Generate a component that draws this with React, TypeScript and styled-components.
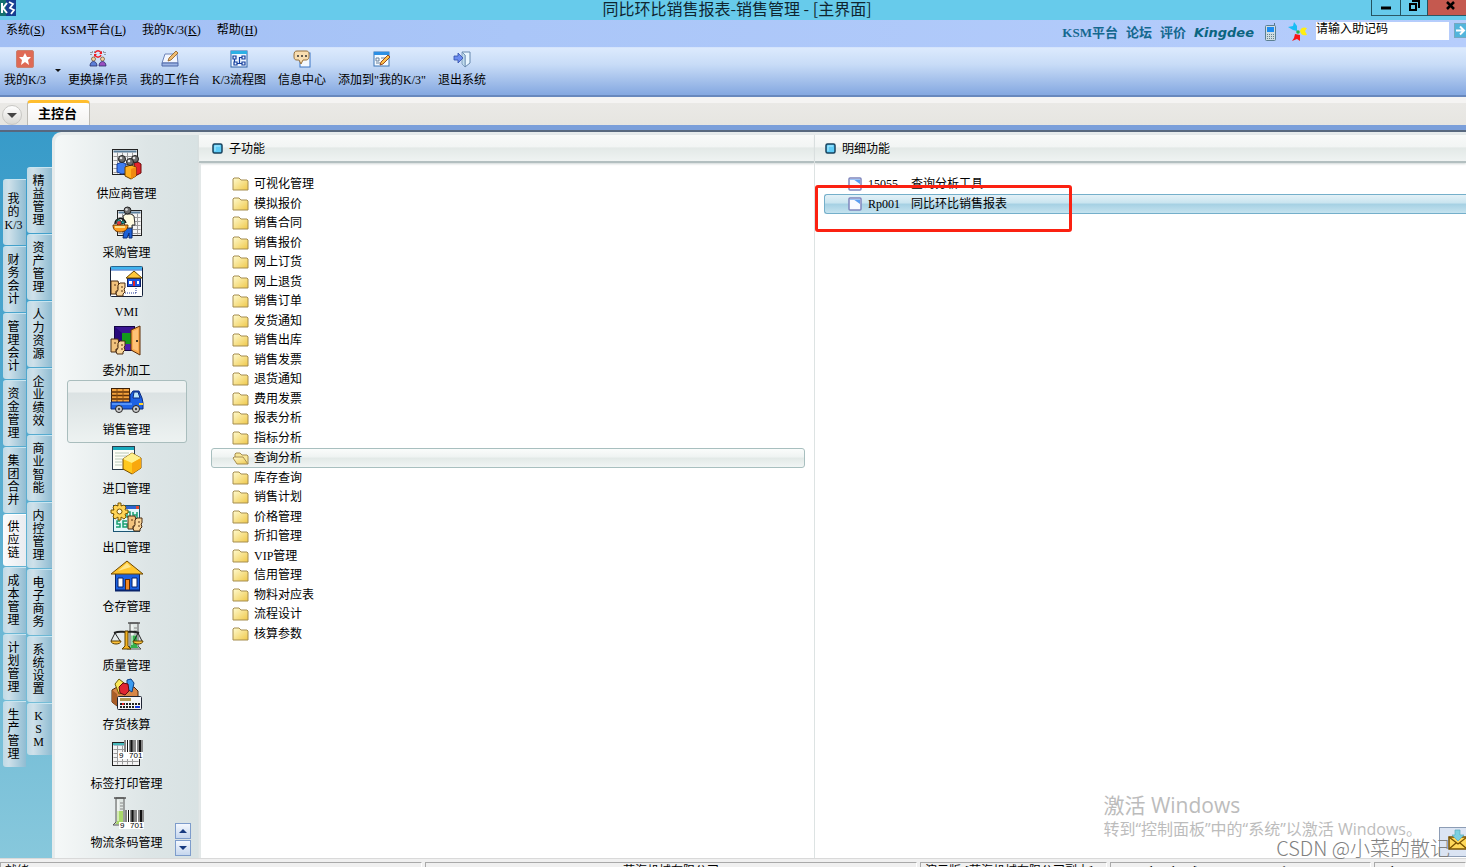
import React from "react";
import styled, { createGlobalStyle } from "styled-components";

const GlobalStyle = createGlobalStyle`
  * { box-sizing: border-box; }
  html, body { margin: 0; height: 100%; overflow: hidden; }
  body, button, input { font-family: "Liberation Serif", "Noto Sans CJK SC", serif; font-size: 12px; color: #000; }
  button { border: 0; background: none; padding: 0; margin: 0; cursor: pointer; white-space: nowrap; }
  svg { display: block; flex: none; }
  ul { list-style: none; margin: 0; padding: 0; }
`;

const Shell = styled.div`
  position: relative;
  display: flex;
  flex-direction: column;
  height: 100vh;
  overflow: hidden;
  background: #fff;
`;

const TitleBar = styled.header`
  display: flex;
  align-items: flex-start;
  height: 20px;
  background: #67cbeb;
`;
const TitleText = styled.h1`
  flex: 1;
  margin: 0;
  padding-left: 87px;
  text-align: center;
  font: 16px/16px "Noto Sans CJK SC", sans-serif;
  color: #102530;
`;
const WindowButtons = styled.div`
  display: flex;
  border-left: 1px solid #22525f;
`;
const WindowButton = styled.button<{ $width: number; $danger?: boolean }>`
  display: flex;
  justify-content: center;
  width: ${(p) => p.$width}px;
  height: 16px;
  border-bottom: 1px solid #2b5965;
  border-right: ${(p) => (p.$danger ? "0" : "1px solid #22525f")};
  padding-left: ${(p) => (p.$danger ? 8 : 0)}px;
  background: ${(p) => (p.$danger ? "#c5594f" : "transparent")};
`;

const MenuBar = styled.div`
  display: flex;
  justify-content: space-between;
  height: 27px;
  background: linear-gradient(90deg, #a2bff4, #aac6f8 35%, #b6cdfc);
`;
const Menus = styled.nav`
  display: flex;
  gap: 16px;
  padding-left: 6px;
`;
const MenuButton = styled.button`
  height: 20px;
  line-height: 20px;
`;
const QuickLinks = styled.div`
  display: flex;
  align-items: flex-start;
  height: 27px;
`;
const QuickLink = styled.a`
  margin-right: 8px;
  font-size: 13px;
  font-weight: bold;
  line-height: 26px;
  color: #14688f;
  text-decoration: none;
`;
const Brand = styled.a`
  font: italic bold 13px/25px "DejaVu Sans", sans-serif;
  color: #0b6580;
  text-decoration: none;
`;
const IconSlot = styled.span<{ $left: number; $top: number }>`
  padding: ${(p) => p.$top}px 0 0 ${(p) => p.$left}px;
`;
const SearchInput = styled.input`
  width: 133px;
  height: 18px;
  margin: 2px 5px 0 8px;
  padding: 0 0 3px;
  border: 0;
  outline: 0;
  background: #fff;
  &::placeholder { color: #000; opacity: 1; }
`;
const GoButton = styled.button`
  width: 12px;
  margin-top: 3px;
  overflow: hidden;
`;

const ToolBar = styled.div`
  display: flex;
  gap: 12px;
  height: 50px;
  padding-left: 4px;
  background: linear-gradient(#dceafd 0, #c8dcf7 35%, #86a9e1 46px);
  border-top: 1px solid #d4e4fc;
  border-bottom: 2px solid #6888bd;
`;
const ToolButton = styled.button`
  display: flex;
  flex-direction: column;
  align-items: center;
  gap: 3px;
  height: 42px;
  padding-top: 2px;
  line-height: 18px;
`;
const ToolGroup = styled.div`
  display: flex;
  gap: 9px;
  margin-right: -5px;
`;
const ArrowButton = styled.button`
  height: 44px;
`;

const TabBar = styled.div`
  display: flex;
  align-items: flex-end;
  gap: 5px;
  height: 33px;
  padding-left: 2px;
  background: linear-gradient(#f5f4f3 6px, #eae9e6 6px, #e6e5e1);
  border-bottom: 5px solid #7b9fda;
`;
const RoundButton = styled.button`
  display: flex;
  align-items: center;
  justify-content: center;
  width: 20px;
  height: 20px;
  border: 1px solid #c8c7c4;
  border-radius: 50%;
  background: linear-gradient(#fff, #d9d8d4);
`;
const PageTab = styled.button`
  height: 25px;
  padding: 0 12px 0 10px;
  border: 1px solid #bdbbb5;
  border-top: 3px solid #ffbe2e;
  border-bottom: 0;
  border-radius: 4px 4px 0 0;
  background: linear-gradient(#fff, #f3f2f0);
  font-size: 13px;
  font-weight: bold;
  line-height: 20px;
`;

const Main = styled.main`
  display: flex;
  flex: 1;
  min-height: 0;
  border-top: 2px solid #58687e;
  background: linear-gradient(#389bc9, #5fb0d1 55%, #87c8dc);
`;
const SideTabs = styled.nav`
  display: flex;
  flex: none;
  align-items: flex-start;
  gap: 1px;
  width: 52px;
  padding: 35px 0 0 3px;
`;
const TabColumn = styled.div<{ $drop?: boolean }>`
  display: flex;
  flex-direction: column;
  gap: 1px;
  width: ${(p) => (p.$drop ? 23 : 25)}px;
  padding-top: ${(p) => (p.$drop ? 12 : 0)}px;
`;
const SideTab = styled.button<{ $active?: boolean; $short?: boolean }>`
  display: flex;
  flex-direction: column;
  align-items: center;
  justify-content: center;
  height: ${(p) => (p.$short ? 52 : 66)}px;
  padding-right: 2px;
  border-radius: 3px 0 0 3px;
  border-top: 1px solid ${(p) => (p.$active ? "#fff" : "#c9e5f0")};
  background: ${(p) =>
    p.$active
      ? "linear-gradient(90deg, #fafbfc, #e9ecf0)"
      : "linear-gradient(90deg, #bfdae6, #cfe1ea 25%, #8fbcd2)"};
  line-height: 13px;
`;

const Workspace = styled.div`
  display: flex;
  flex: 1;
  min-width: 0;
  padding: 3px 0 0 3px;
  border-radius: 9px 0 0 0;
  background: #e6ebec;
`;
const ModuleNav = styled.nav`
  position: relative;
  display: flex;
  flex-direction: column;
  align-items: center;
  flex: none;
  width: 143px;
  padding-top: 11px;
  border-radius: 7px 0 0 0;
  background: linear-gradient(90deg, #f5f8f8, #dde5e6 65%, #d8e2e3);
  overflow: hidden;
`;
const ModuleButton = styled.button<{ $active?: boolean }>`
  display: flex;
  flex: none;
  flex-direction: column;
  align-items: center;
  gap: 5px;
  width: 120px;
  height: 63px;
  margin: -2px 0;
  padding-top: 2px;
  border: 1px solid ${(p) => (p.$active ? "#a9bdbd" : "transparent")};
  border-radius: 3px;
  background: ${(p) =>
    p.$active ? "linear-gradient(#edf1f1 11px, #dbe2e3 12px, #edf2f1)" : "none"};
  line-height: 16px;
`;
const Scroller = styled.div`
  position: absolute;
  right: 7px;
  bottom: 2px;
  display: flex;
  flex-direction: column;
  gap: 1px;
`;
const ScrollButton = styled.button`
  display: flex;
  align-items: center;
  justify-content: center;
  width: 16px;
  height: 16px;
  border: 1px solid #7d9ccb;
  background: linear-gradient(#f4f8fe, #c5d6ee);
`;

const Panes = styled.div`
  position: relative;
  display: grid;
  grid-template-columns: 616fr 652fr;
  flex: 1;
  min-width: 0;
`;
const Pane = styled.section`
  display: flex;
  flex-direction: column;
  min-width: 0;
  border-left: 1px solid #dde3e3;
  background: #fff;
`;
const PaneHeader = styled.h2<{ $inset: number }>`
  display: flex;
  flex: none;
  align-items: center;
  gap: 6px;
  height: 28px;
  margin: 0;
  padding-left: ${(p) => p.$inset}px;
  border-bottom: 2px solid #b3bfc0;
  background: linear-gradient(#f8faf9, #f2f5f4 45%, #e3e9e7 50%, #eff3f2);
  box-shadow: 0 1px 2px #cfd6d6;
  font-size: 12px;
  font-weight: normal;
`;
const FunctionList = styled.ul`
  flex: 1;
  padding: 11px 9px 0 10px;
  border-left: 2px solid #e3e8e8;
`;
const FunctionRow = styled.li<{ $active?: boolean }>`
  height: 19px;
  &:nth-child(odd) { height: 20px; }
  margin-top: ${(p) => (p.$active ? 1 : 0)}px;
`;
const FunctionButton = styled.button<{ $active?: boolean }>`
  display: flex;
  align-items: center;
  gap: 5px;
  width: 100%;
  height: 20px;
  padding-left: 20px;
  border: 1px solid ${(p) => (p.$active ? "#a8bfbf" : "transparent")};
  border-radius: 3px;
  background: ${(p) =>
    p.$active ? "linear-gradient(#fafcfb, #eff3f2 45%, #e2e9e7 50%, #f1f5f4)" : "none"};
  line-height: 18px;
`;
const DetailList = styled.ul`
  padding: 11px 0 0 9px;
`;
const DetailButton = styled.button<{ $active?: boolean }>`
  display: grid;
  grid-template-columns: 20px 43px auto;
  justify-content: start;
  align-items: center;
  width: 100%;
  height: 20px;
  padding-left: 23px;
  border: 1px solid ${(p) => (p.$active ? "#74afca" : "transparent")};
  border-right: 0;
  border-radius: 3px 0 0 3px;
  background: ${(p) =>
    p.$active ? "linear-gradient(#e3f1f7, #c9e4ef 45%, #a5d0e3 50%, #c5e3ef)" : "none"};
  text-align: left;
  line-height: 18px;
`;
const Highlight = styled.div`
  position: absolute;
  top: 50px;
  left: calc(100% * 617 / 1268);
  width: 257px;
  height: 47px;
  border: 3px solid #fb2111;
  border-radius: 3px;
  pointer-events: none;
`;

const StatusBar = styled.footer`
  display: grid;
  grid-template-columns: 422fr 492fr 187fr 261fr 92fr;
  gap: 3px;
  flex: none;
  height: 9px;
  padding-top: 3px;
  border-top: 1px solid #d9d9d9;
  background: #f0f0f0;
  overflow: hidden;
`;
const StatusCell = styled.div<{ $center?: boolean }>`
  height: 20px;
  min-width: 0;
  padding: 0 4px;
  border: 1px solid #a9a9a9;
  border-right-color: #fff;
  line-height: 17px;
  text-align: ${(p) => (p.$center ? "center" : "left")};
  white-space: nowrap;
  overflow: hidden;
`;

const Activation = styled.div`
  position: absolute;
  right: 44px;
  bottom: 28px;
  font-family: "Open Sans", "Noto Sans CJK SC", sans-serif;
  color: #bcbcbc;
  white-space: nowrap;
  pointer-events: none;
`;
const ActivationTitle = styled.div`
  font-size: 21px;
  line-height: 28px;
`;
const ActivationText = styled.div`
  font-size: 16px;
  line-height: 20px;
`;
const MailBadge = styled.button`
  position: absolute;
  right: 0;
  bottom: 10px;
  width: 27px;
  height: 30px;
  border: 1px solid #8d9db5;
  border-right: 0;
  background: #dbe4f3;
`;
const Signature = styled.div`
  position: absolute;
  right: 16px;
  bottom: 9px;
  font: 300 20px/20px "Noto Sans CJK SC", sans-serif;
  color: #808080;
  white-space: nowrap;
  pointer-events: none;
`;

/* ---------- shared drawing parts ---------- */

const Sheet = ({ x, y, w, h }: { x: number; y: number; w: number; h: number }) => (
  <g>
    <rect x={x} y={y} width={w} height={h} fill="#f4f4f4" stroke="#222" />
    <rect x={x + 1} y={y + 1} width={w - 2} height="2" fill="#5b7f9b" />
    {[7, 11, 15, 19, 23].filter((d) => d < h - 1).map((d) => (
      <path key={d} d={`M${x + 1} ${y + d}h${w - 2}`} stroke="#9b9b9b" />
    ))}
    {[5, 10, 15, 20].filter((d) => d < w - 1).map((d) => (
      <path key={d} d={`M${x + d} ${y + 3}v${h - 4}`} stroke="#9b9b9b" />
    ))}
  </g>
);

const Faces = ({ x, y }: { x: number; y: number }) => (
  <g transform={`translate(${x} ${y})`}>
    <path d="M1 1h7l1 4-1 3 1 3H6v3H1z" fill="#f2c27c" stroke="#4a2c12" />
    <path d="M8 5l2-2h5v5l-1 1 1 3-2 2v2H7l-1-3 2-3z" fill="#f9d59a" stroke="#4a2c12" />
    <path d="M4 5h2M11 7h2M11 11h2" stroke="#5a3312" />
  </g>
);

const Barcode = ({ x, y }: { x: number; y: number }) => (
  <g transform={`translate(${x} ${y})`}>
    <rect width="19" height="18" fill="#fff" />
    <path d="M1 0v12M3.500 0v12M6 0v12M9 0v12M11 0v12M14 0v12M18 0v12" stroke="#111" />
    <path d="M7.500 0v12M16 0v12" stroke="#111" strokeWidth="2" />
    <rect x="-6" y="12" width="25" height="7" fill="#fff" />
    <text x="-5" y="18" fontSize="8" fontFamily="Liberation Sans, sans-serif">9</text>
    <text x="5" y="18" fontSize="8" fontFamily="Liberation Sans, sans-serif">701</text>
  </g>
);

const Head = ({ x, y }: { x: number; y: number }) => (
  <g>
    <circle cx={x} cy={y} r="3.500" fill="#6d6d6d" stroke="#222" />
    <circle cx={x - 1} cy={y - 1} r="1.300" fill="#e2e2e2" />
  </g>
);

const Cylinder = ({ x, y, h, fill }: { x: number; y: number; h: number; fill: string }) => (
  <g transform={`translate(${x} ${y})`}>
    <path d={`M2 1h8v${h - 4}l3 3H-1l3-3z`} fill="#dfe6e3" stroke="#555" />
    <path d={`M3 ${h / 2}h6v${h / 2 - 3}l2 2H1l2-2z`} fill={fill} />
    <path d="M0 1h12" stroke="#555" strokeWidth="1.500" />
    <path d={`M4 3v${h - 7}`} stroke="#fff" />
    <path d="M6 6h3M6 9h3M6 12h3" stroke="#888" />
  </g>
);

const moduleDrawings: Record<string, React.ReactNode> = {
  suppliers: (
    <>
      <Sheet x={2.5} y={2.5} w={25} h={25} />
      <path d="M7 17l5-2 4 2v9l-4 1-5-2z" fill="#3f7df0" stroke="#173a94" />
      <path d="M24 16l4-1 3 2v9l-6 3z" fill="#e3242b" stroke="#6b0d0d" />
      <path d="M15 20l6-2 5 2v9l-5 3-6-3z" fill="#ffb01f" stroke="#6b4100" />
      <path d="M21 22v10l5-3v-9z" fill="#f08a12" />
      <Head x={12} y={12} /><Head x={25} y={12} /><Head x={20} y={15} />
    </>
  ),
  purchase: (
    <>
      <Sheet x={7.5} y={4.5} w={24} h={25} />
      <path d="M15 21h7v11h-3v-5l-2 5h-4z" fill="#1d61d8" stroke="#0b2d78" />
      <path d="M13 10l3-2h5l3 2 1 9h-3v3h-7z" fill="#fffbe0" stroke="#333" />
      <Head x={17.5} y={4.5} />
      <path d="M5 18c0-6 8-8 11-1" fill="none" stroke="#111" strokeWidth="1.500" />
      <path d="M6 17l2-4 3 2v4zM10 18l3-4 2 3z" fill="#18a6b4" stroke="#243" />
      <circle cx="9" cy="17" r="2" fill="#e2313b" />
      <path d="M3 19h15c0 5-4 7-8 7s-7-2-7-7z" fill="#ff9d1e" stroke="#6b3600" />
      <path d="M5 21h10" stroke="#ffe08a" strokeWidth="2" />
    </>
  ),
  vmi: (
    <>
      <rect x="0.500" y="1.500" width="32" height="30" rx="1" fill="#fff" stroke="#14213a" />
      <path d="M1 3h31" stroke="#3fb3ee" strokeWidth="3" />
      <path d="M1 5h31" stroke="#1c5cc4" />
      <rect x="17.500" y="13.500" width="13" height="8" fill="#1d55e0" stroke="#0b1f66" />
      <path d="M16 13L24 6l8 7z" fill="#ffc83a" stroke="#6b4600" />
      <path d="M19 16h3v3h-3zM27 16h2v3h-2z" fill="#fff" /><path d="M23 16h2v5h-2z" fill="#e2232b" />
      <path d="M15 28h11M26 23v6" stroke="#223a9a" strokeDasharray="1 1" />
      <Faces x={0} y={15} />
    </>
  ),
  outsource: (
    <>
      <rect x="4.500" y="2.500" width="20" height="24" fill="#3a1592" stroke="#120545" />
      <path d="M5 3l7 6v11l-7 6z" fill="#26087a" />
      <rect x="12" y="9" width="9" height="11" fill="#129a1c" />
      <path d="M12 20h9l3 6H6z" fill="#4c20ad" />
      <path d="M21 6l9-4v29l-9-5z" fill="#f9a94e" stroke="#5d2c06" />
      <path d="M23 7l5-2v22l-5-2z" fill="#ffc278" /><circle cx="27" cy="17" r="1" fill="#111" />
      <Faces x={0} y={14} />
    </>
  ),
  sales: (
    <>
      <rect x="1.500" y="5.500" width="18" height="14" fill="#f3a13b" stroke="#3d2006" />
      <path d="M1 9h18M1 12.500h18M1 16h18" stroke="#5d310a" strokeWidth="1.500" />
      <path d="M7 6v13M13 6v13" stroke="#8a4e12" />
      <path d="M20 12l3-4h6l3 7 1 5v6H1v-7h19z" fill="#1e62e4" stroke="#0a2a7c" />
      <path d="M24 9h4l2 6h-7z" fill="#bfe8fb" stroke="#0a2a7c" />
      <path d="M2 21h20" stroke="#69a4ff" strokeWidth="1.500" />
      <path d="M29 21h4" stroke="#ffd22e" strokeWidth="2" />
      <circle cx="9" cy="26" r="3.500" fill="#cfcfcf" stroke="#222" /><circle cx="9" cy="26" r="1.200" fill="#444" />
      <circle cx="26" cy="26" r="3.500" fill="#cfcfcf" stroke="#222" /><circle cx="26" cy="26" r="1.200" fill="#444" />
    </>
  ),
  imports: (
    <>
      <rect x="2.500" y="4.500" width="22" height="23" fill="#fdfdf6" stroke="#2c3b4a" />
      <path d="M3 6.500h21" stroke="#18a9bd" strokeWidth="3" />
      <path d="M5 11h14M5 14h12M5 17h10M5 20h7M5 23h7" stroke="#b8c9b8" />
      <path d="M13 17l9-6 9 5v10l-9 6-9-5z" fill="#ffc81e" stroke="#7a4f00" />
      <path d="M13 17l9-6 9 5-9 5z" fill="#fff08a" /><path d="M22 21l9-5v10l-9 6z" fill="#f8a80e" />
    </>
  ),
  exports: (
    <>
      <rect x="3.500" y="4.500" width="26" height="26" fill="#e4f7fb" stroke="#1b5573" />
      <path d="M4 6.500h25" stroke="#2d64cf" strokeWidth="3" />
      <path d="M26 5h3v3h-3z" fill="#e2452b" />
      <path d="M17 11h3v5h-3zM23 11v3h4M27 11v6" fill="none" stroke="#18a070" strokeWidth="1.500" />
      <path d="M10 20H7v3h3v3H6M17 20h-4v6h4v-3h-4" fill="none" stroke="#18a070" strokeWidth="1.500" />
      <path d="M8 2h3v3l3-1 2 2-1 3h3v3l-3 1 1 3-2 2-3-2v3H8v-3l-3 2-2-2 1-3-3-1V9h3L3 6l2-2 3 1z" fill="#ffd456" stroke="#7b5600" />
      <circle cx="9.500" cy="10.500" r="2.500" fill="#fffbe0" stroke="#7b5600" />
      <Faces x={17} y={14} />
    </>
  ),
  warehouse: (
    <>
      <rect x="5.500" y="13.500" width="24" height="17" fill="#1b62e2" stroke="#08236b" />
      <path d="M1 14L17 1l16 13z" fill="#ffc52f" stroke="#6d4700" />
      <path d="M8 11L17 3l4 4z" fill="#ffe68a" />
      <path d="M8 18h5v9H8zM22 18h5v9h-5z" fill="#fff" stroke="#08236b" />
      <rect x="15.500" y="19.500" width="4" height="11" fill="#f28a25" stroke="#5d2600" />
      <path d="M5 30.500h25" stroke="#08236b" strokeWidth="2" />
    </>
  ),
  quality: (
    <>
      <Cylinder x={18} y={3} h={27} fill="#34b04d" />
      <path d="M4 14c5-2 7-1 12-1s8-1 13 1" fill="none" stroke="#222" strokeWidth="2" />
      <path d="M5 14l-4 8M5 14l5 8M28 14l-4 8M28 14l4 8" stroke="#222" />
      <path d="M15 12h3v15l3 3H12l3-3z" fill="#f3b11f" stroke="#5d4000" />
      <path d="M1 22h10c0 4-10 4-10 0zM23 22h10c0 4-10 4-10 0z" fill="#ffc33a" stroke="#5d4000" />
    </>
  ),
  stock: (
    <>
      <path d="M2 12l5-3h17l4 4v15H7l-5-4z" fill="#d78648" stroke="#4d2408" />
      <path d="M2 12l5 4v12l-5-4z" fill="#a85d28" />
      <path d="M5 6l4-5 5 4 1 8-6 3z" fill="#fbe85a" stroke="#6d5c00" />
      <path d="M17 2l4-1 3 4-2 9-5-3z" fill="#3c9cf0" stroke="#0c3f85" />
      <path d="M9 9l4-4 5 1 1 7-4 4-5-2z" fill="#e02532" stroke="#5f0810" />
      <rect x="7.500" y="18.500" width="24" height="13" rx="1" fill="#f3f4f8" stroke="#1e2433" />
      <rect x="10" y="20" width="11" height="3" fill="#b69a53" />
      <path d="M10 26h20M10 29h14" stroke="#222" strokeWidth="2" strokeDasharray="2 1" />
      <path d="M25 29h5" stroke="#1737e0" strokeWidth="2" /><path d="M12 26h2" stroke="#e22" strokeWidth="2" />
    </>
  ),
  labels: (
    <>
      <Sheet x={2.5} y={5.5} w={27} h={23} />
      <path d="M3 7h26" stroke="#45b7b9" strokeWidth="2" />
      <Barcode x={14} y={3} />
    </>
  ),
  logistics: (
    <>
      <Cylinder x={4} y={1} h={28} fill="#a9d86a" />
      <Barcode x={15} y={14} />
    </>
  ),
};

const modules: [string, string][] = [
  ["供应商管理", "suppliers"], ["采购管理", "purchase"], ["VMI", "vmi"], ["委外加工", "outsource"],
  ["销售管理", "sales"], ["进口管理", "imports"], ["出口管理", "exports"], ["仓存管理", "warehouse"],
  ["质量管理", "quality"], ["存货核算", "stock"], ["标签打印管理", "labels"], ["物流条码管理", "logistics"],
];

const Person = ({ x, fill }: { x: number; fill: string }) => (
  <g transform={`translate(${x} 7)`}>
    <circle cx="3.500" cy="2" r="2" fill="#f3d3a4" stroke="#6b4b2a" strokeWidth="0.700" />
    <path d="M0 9c0-6 7-6 7 0z" fill={fill} stroke="#2a2f6b" strokeWidth="0.800" />
  </g>
);

const tools: [string, React.ReactNode][] = [
  ["更换操作员", (
    <>
      <Person x={1} fill="#5d7fd8" /><Person x={10} fill="#9a4fc0" />
      <path d="M2 5V2h4M12 2h4v3" fill="none" stroke="#555" strokeDasharray="1 1" />
      <path d="M6 3c1-3 5-3 6 0M12 5c-1 3-5 3-6 0" fill="none" stroke="#ee1c24" strokeWidth="1.300" />
      <path d="M13 1v3h-3zM5 7V4h3z" fill="#ee1c24" />
    </>
  )],
  ["我的工作台", (
    <>
      <path d="M4 4h12l1 9H1z" fill="#f2f6ff" stroke="#6d83b8" /><path d="M1 13h16v3H1z" fill="#9db4e4" stroke="#4e69a8" />
      <path d="M7 11l1-3 7-7 2 2-7 7z" fill="#f0bd72" stroke="#8b5a1f" strokeWidth="0.800" />
    </>
  )],
  ["K/3流程图", (
    <>
      <rect x="1" y="1" width="16" height="16" fill="#eef6ff" stroke="#2f62a8" /><path d="M1 2.500h16" stroke="#2cb0e4" strokeWidth="3" />
      <path d="M3 6h3v3H3zM4.500 9v3M4 12h3v3H4zM12 6h3v3h-3zM12 12h3v3h-3zM7 13.500h2.500v-6H12M9.500 13.500H12" fill="none" stroke="#123c9c" strokeWidth="1.200" />
    </>
  )],
  ["信息中心", (
    <>
      <rect x="7" y="3" width="10" height="14" fill="#f4f9ff" stroke="#3b74c4" />
      <path d="M4 1h9c3 0 3 2 3 4s0 5-3 5h-3l-2 4-2-4H4C1 10 1 8 1 5s1-4 3-4z" fill="#f8ddb0" stroke="#96703c" />
      <path d="M4 6h2M8 6h2M12 6h2" stroke="#333" strokeWidth="1.500" />
    </>
  )],
  ['添加到"我的K/3"', (
    <>
      <rect x="1" y="2" width="15" height="14" fill="#f5faff" stroke="#3b74b4" /><path d="M1 3.500h15" stroke="#2c8fe4" strokeWidth="3" />
      <path d="M3 8h3v3H3zM8 8h5M3 13h4" fill="none" stroke="#69809a" />
      <path d="M7 15l1-3 7-7 2 2-7 7z" fill="#ffc14a" stroke="#8a3c16" strokeWidth="0.900" />
    </>
  )],
  ["退出系统", (
    <>
      <path d="M9 2h8v11l-5 4V5z" fill="#e8f6ff" stroke="#6788ad" /><path d="M9 2l3 3v12l-3-3z" fill="#bfdced" stroke="#6788ad" strokeWidth="0.700" />
      <path d="M1 6h4V3l5 5-5 5v-3H1z" fill="#6b8cf0" stroke="#314ea8" strokeWidth="0.800" />
    </>
  )],
];

const columnOne = ["我的K/3", "财务会计", "管理会计", "资金管理", "集团合并", "供应链", "成本管理", "计划管理", "生产管理"];
const columnTwo = ["精益管理", "资产管理", "人力资源", "企业绩效", "商业智能", "内控管理", "电子商务", "系统设置", "KSM"];

const functions = [
  "可视化管理", "模拟报价", "销售合同", "销售报价", "网上订货", "网上退货", "销售订单", "发货通知",
  "销售出库", "销售发票", "退货通知", "费用发票", "报表分析", "指标分析", "查询分析", "库存查询",
  "销售计划", "价格管理", "折扣管理", "VIP管理", "信用管理", "物料对应表", "流程设计", "核算参数",
];

const glyphs = (label: string) => (label === "我的K/3" ? ["我", "的", "K/3"] : Array.from(label));

const ToolIcon = ({ children }: { children: React.ReactNode }) => (
  <svg width="18" height="18" viewBox="0 0 18 18" aria-hidden="true">{children}</svg>
);

const FolderIcon = ({ open }: { open?: boolean }) => (
  <svg width="17" height="15" viewBox="0 0 17 15" aria-hidden="true">
    <defs>
      <linearGradient id="folder" x1="0" y1="0" x2="1" y2="1">
        <stop offset="0" stopColor="#fffbd0" /><stop offset="1" stopColor="#efc84a" />
      </linearGradient>
    </defs>
    {open ? (
      <>
        <path d="M3 7V3l1-1h4l2 2h5l1 1v8" fill="#f7e79b" stroke="#a58d50" />
        <path d="M1 7l1-1h9l5 7H5z" fill="url(#folder)" stroke="#a58d50" />
      </>
    ) : (
      <path d="M1 13V2l1-1h5l2 2h6l1 1v9z" fill="url(#folder)" stroke="#a58d50" />
    )}
  </svg>
);

const FormIcon = () => (
  <svg width="14" height="14" viewBox="0 0 14 14" aria-hidden="true">
    <rect x="1" y="1" width="12" height="12" rx="1" fill="#f8faff" stroke="#7f86bd" strokeWidth="1.500" />
    <path d="M5 2h7v5z" fill="#5c9df0" /><path d="M2 2h10v1H2z" fill="#9cc3f6" />
  </svg>
);

const Bullet = () => (
  <svg width="11" height="11" viewBox="0 0 11 11" aria-hidden="true">
    <rect x="1" y="1" width="9" height="9" rx="1.500" fill="#5fcdf8" stroke="#17415c" strokeWidth="1.500" />
    <path d="M3 8V3h5" fill="none" stroke="#b4ecff" />
  </svg>
);

const Triangle = ({ up, color = "#111", size = 8 }: { up?: boolean; color?: string; size?: number }) => (
  <svg width={size} height={size / 2} viewBox="0 0 8 4" aria-hidden="true">
    <path d={up ? "M0 4l4-4 4 4z" : "M0 0h8L4 4z"} fill={color} />
  </svg>
);

const menus: [string, string, string][] = [
  ["系统(", "S", ")"], ["KSM平台(", "L", ")"], ["我的K/3(", "K", ")"], ["帮助(", "H", ")"],
];

export default function App() {
  return (
    <Shell>
      <GlobalStyle />
      <TitleBar>
        <svg width="16" height="16" viewBox="0 0 16 16" aria-hidden="true">
          <rect width="16" height="16" fill="#173e91" /><path d="M0 0h6v16H0z" fill="#14706f" />
          <path d="M2 3v10M7 3L3 8l4 5" fill="none" stroke="#fff" strokeWidth="2" />
          <path d="M9 2l4 2-3 4 4 2-3 4" fill="none" stroke="#fff" strokeWidth="1.800" />
        </svg>
        <TitleText>同比环比销售报表-销售管理 - [主界面]</TitleText>
        <WindowButtons>
          <WindowButton $width={29} aria-label="最小化">
            <svg width="12" height="12" viewBox="0 0 12 12"><path d="M1 8h10" stroke="#000" strokeWidth="3" /></svg>
          </WindowButton>
          <WindowButton $width={27} aria-label="还原">
            <svg width="12" height="12" viewBox="0 0 12 12"><path d="M2 4h6v6H2zM4 1h7v7" fill="none" stroke="#000" strokeWidth="2" /></svg>
          </WindowButton>
          <WindowButton $width={38} $danger aria-label="关闭">
            <svg width="12" height="12" viewBox="0 0 12 12"><path d="M2 2l7 7M9 2l-7 7" stroke="#000" strokeWidth="2.500" /></svg>
          </WindowButton>
        </WindowButtons>
      </TitleBar>

      <MenuBar>
        <Menus>
          {menus.map(([before, key, after]) => (
            <MenuButton key={key}>{before}<u>{key}</u>{after}</MenuButton>
          ))}
        </Menus>
        <QuickLinks>
          <QuickLink href="#ksm">KSM平台</QuickLink>
          <QuickLink href="#forum">论坛</QuickLink>
          <QuickLink href="#review">评价</QuickLink>
          <Brand href="#kingdee">Kingdee</Brand>
          <IconSlot $left={11} $top={3}>
            <svg width="11" height="18" viewBox="0 0 11 18" aria-hidden="true">
              <path d="M9 0h1v4H9z" fill="#5b7688" />
              <rect x="0.500" y="2.500" width="10" height="15" rx="1" fill="#cfdde2" stroke="#5b7f90" />
              <rect x="2" y="4" width="7" height="5" fill="#1d8df0" />
              <path d="M2 11.500h7M2 13.500h7M2 15.500h7" stroke="#67828e" strokeDasharray="1 1" />
            </svg>
          </IconSlot>
          <IconSlot $left={12} $top={2}>
            <svg width="20" height="20" viewBox="0 0 20 20" aria-hidden="true">
              <path d="M6 0l3 4v5L5 8 0 5l5-1z" fill="#19bdf5" />
              <path d="M19 6l-2 3 2 4c-4 1-6 0-7-4 1-4 4-4 7-3z" fill="#ffee10" />
              <path d="M7 12l5 1v6l-3-2-5 2 2-3z" fill="#fa1414" />
              <circle cx="10" cy="10" r="1.800" fill="#29b24b" />
            </svg>
          </IconSlot>
          <SearchInput aria-label="助记码" placeholder="请输入助记码" />
          <GoButton aria-label="执行">
            <svg width="16" height="15" viewBox="0 0 16 15" aria-hidden="true">
              <rect x="0.500" y="0.500" width="15" height="14" fill="#53b5dc" stroke="#76a8c0" />
              <path d="M2 7.500h7M6 3.500l4 4-4 4" fill="none" stroke="#fff" strokeWidth="2" />
            </svg>
          </GoButton>
        </QuickLinks>
      </MenuBar>

      <ToolBar>
        <ToolGroup>
          <ToolButton>
            <ToolIcon>
              <rect x="0.500" y="0.500" width="17" height="17" rx="1.500" fill="#df6a55" stroke="#c9806f" />
              <path d="M9 3l2 4h4l-3 3 1 5-4-3-4 3 1-5-3-3h4z" fill="#fff" />
            </ToolIcon>
            我的K/3
          </ToolButton>
          <ArrowButton aria-label="展开我的K/3"><Triangle size={6} /></ArrowButton>
        </ToolGroup>
        {tools.map(([label, icon]) => (
          <ToolButton key={label}><ToolIcon>{icon}</ToolIcon>{label}</ToolButton>
        ))}
      </ToolBar>

      <TabBar>
        <RoundButton aria-label="页签列表"><Triangle size={10} color="#444" /></RoundButton>
        <PageTab>主控台</PageTab>
      </TabBar>

      <Main>
        <SideTabs>
          <TabColumn $drop>
            {columnOne.map((label) => (
              <SideTab key={label} $active={label === "供应链"} $short={label === "供应链"}>
                {glyphs(label).map((g, i) => <span key={i}>{g}</span>)}
              </SideTab>
            ))}
          </TabColumn>
          <TabColumn>
            {columnTwo.map((label) => (
              <SideTab key={label} $short={label === "KSM"}>
                {glyphs(label).map((g, i) => <span key={i}>{g}</span>)}
              </SideTab>
            ))}
          </TabColumn>
        </SideTabs>

        <Workspace>
          <ModuleNav>
            {modules.map(([label, icon]) => (
              <ModuleButton key={label} $active={icon === "sales"}>
                <svg width="34" height="34" viewBox="0 0 34 34" aria-hidden="true">{moduleDrawings[icon]}</svg>
                {label}
              </ModuleButton>
            ))}
            <Scroller>
              <ScrollButton aria-label="向上"><Triangle up color="#173a80" /></ScrollButton>
              <ScrollButton aria-label="向下"><Triangle color="#173a80" /></ScrollButton>
            </Scroller>
          </ModuleNav>

          <Panes>
            <Pane>
              <PaneHeader $inset={13}><Bullet />子功能</PaneHeader>
              <FunctionList>
                {functions.map((label) => {
                  const active = label === "查询分析";
                  return (
                    <FunctionRow key={label} $active={active}>
                      <FunctionButton $active={active}><FolderIcon open={active} />{label}</FunctionButton>
                    </FunctionRow>
                  );
                })}
              </FunctionList>
            </Pane>
            <Pane>
              <PaneHeader $inset={10}><Bullet />明细功能</PaneHeader>
              <DetailList>
                <li><DetailButton><FormIcon /><span>15055</span><span>查询分析工具</span></DetailButton></li>
                <li><DetailButton $active><FormIcon /><span>Rp001</span><span>同比环比销售报表</span></DetailButton></li>
              </DetailList>
            </Pane>
            <Highlight />
          </Panes>
        </Workspace>
      </Main>

      <StatusBar>
        <StatusCell>就绪</StatusCell>
        <StatusCell $center>蓝海机械有限公司</StatusCell>
        <StatusCell>演示版-[蓝海机械有限公司副本]</StatusCell>
        <StatusCell>General Ledger [Service Center Info Co</StatusCell>
        <StatusCell>Administrator</StatusCell>
      </StatusBar>

      <Activation>
        <ActivationTitle>激活 Windows</ActivationTitle>
        <ActivationText>转到“控制面板”中的“系统”以激活 Windows。</ActivationText>
      </Activation>
      <MailBadge aria-label="消息">
        <svg width="26" height="28" viewBox="0 0 26 28" aria-hidden="true">
          <path d="M9 9h19v12H9z" fill="#ffd95a" stroke="#7a5200" strokeWidth="1.500" />
          <path d="M9 9l9 7 9-7M9 21l7-6M27 21l-7-6" fill="none" stroke="#7a5200" strokeWidth="1.300" />
          <path d="M15 2h5v5h4l-6 6-6-6h3z" fill="#7ccfe0" stroke="#5aa9ba" strokeWidth="0.700" />
        </svg>
      </MailBadge>
      <Signature>CSDN @小菜的散记</Signature>
    </Shell>
  );
}
